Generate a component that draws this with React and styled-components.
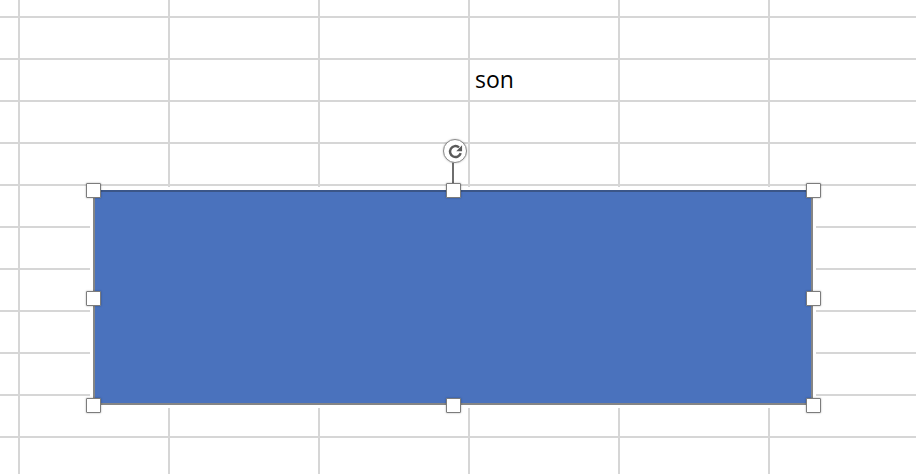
import styled, { createGlobalStyle } from 'styled-components';

const GlobalStyle = createGlobalStyle`
  html, body {
    margin: 0;
    padding: 0;
    background: #ffffff;
  }
  body {
    font-family: 'Open Sans', 'Liberation Sans', sans-serif;
  }
`;

const Sheet = styled.div`
  position: relative;
  width: 916px;
  height: 474px;
  overflow: hidden;
  background: #ffffff;
`;

const Grid = styled.div`
  display: grid;
  grid-template-columns: 18px repeat(6, 148px) 1fr;
  grid-template-rows: 16px repeat(11, 40px);
  gap: 2px;
  background: #d6d6d6;
  width: 940px;
`;

const Cell = styled.div`
  background: #ffffff;
  padding: 8px 0 0 5px;
  font-size: 23px;
  line-height: 23px;
  color: #000000;
  white-space: nowrap;
`;

const Shape = styled.div`
  position: absolute;
  left: 93px;
  top: 190px;
  width: 720px;
  height: 215px;
  box-sizing: border-box;
  background: #4a72bd;
  border: 2px solid #858585;
  border-top-color: #3b5688;
  box-shadow: 0 0 0 3px #ffffff;
`;

// handles sit on the outer edge of the shape, so offset past its 2px border
const Handle = styled.span`
  position: absolute;
  left: calc(${(p) => p.fx} * (100% + 4px) - 2px);
  top: calc(${(p) => p.fy} * (100% + 4px) - 2px);
  width: 15px;
  height: 15px;
  margin: -7px 0 0 -7px;
  background: #ffffff;
  border: 1px solid #7c7c7c;
  border-radius: 1px;
  box-shadow: 0 0 2px rgba(0, 0, 0, 0.35);
  box-sizing: border-box;
`;

const Stem = styled.span`
  position: absolute;
  left: 50%;
  top: -31px;
  width: 1.5px;
  height: 23px;
  margin-left: -1px;
  background: #6e6e6e;
`;

const Rotator = styled.span`
  position: absolute;
  left: 50%;
  top: -53px;
  width: 24px;
  height: 24px;
  margin-left: -10px;
  box-sizing: border-box;
  border-radius: 50%;
  background: #ffffff;
  border: 1px solid #8a8a8a;
  box-shadow: 0 0 2px rgba(0, 0, 0, 0.25);
  display: flex;
  align-items: center;
  justify-content: center;
`;

const RotateIcon = () => (
  <svg width="17" height="17" viewBox="0 0 14 14">
    <path
      d="M11.3 8.4 A4.5 4.5 0 1 1 9.9 3.6"
      fill="none"
      stroke="#5a5a5a"
      strokeWidth="2"
    />
    <path d="M12.4 1.8 L12.4 6.8 L7.6 6.8 Z" fill="#5a5a5a" />
  </svg>
);

const handles = [
  [0, 0],
  [0.5, 0],
  [1, 0],
  [0, 0.5],
  [1, 0.5],
  [0, 1],
  [0.5, 1],
  [1, 1],
];

const COLS = 8;
const ROWS = 12;

export default function App() {
  const cells = [];
  for (let r = 0; r < ROWS; r++) {
    for (let c = 0; c < COLS; c++) {
      cells.push(
        <Cell key={`${r}-${c}`}>{r === 2 && c === 4 ? 'son' : null}</Cell>
      );
    }
  }

  return (
    <>
      <GlobalStyle />
      <Sheet>
        <Grid>{cells}</Grid>
        <Shape>
          <Stem />
          <Rotator>
            <RotateIcon />
          </Rotator>
          {handles.map(([x, y]) => (
            <Handle key={`${x}-${y}`} fx={x} fy={y} />
          ))}
        </Shape>
      </Sheet>
    </>
  );
}
